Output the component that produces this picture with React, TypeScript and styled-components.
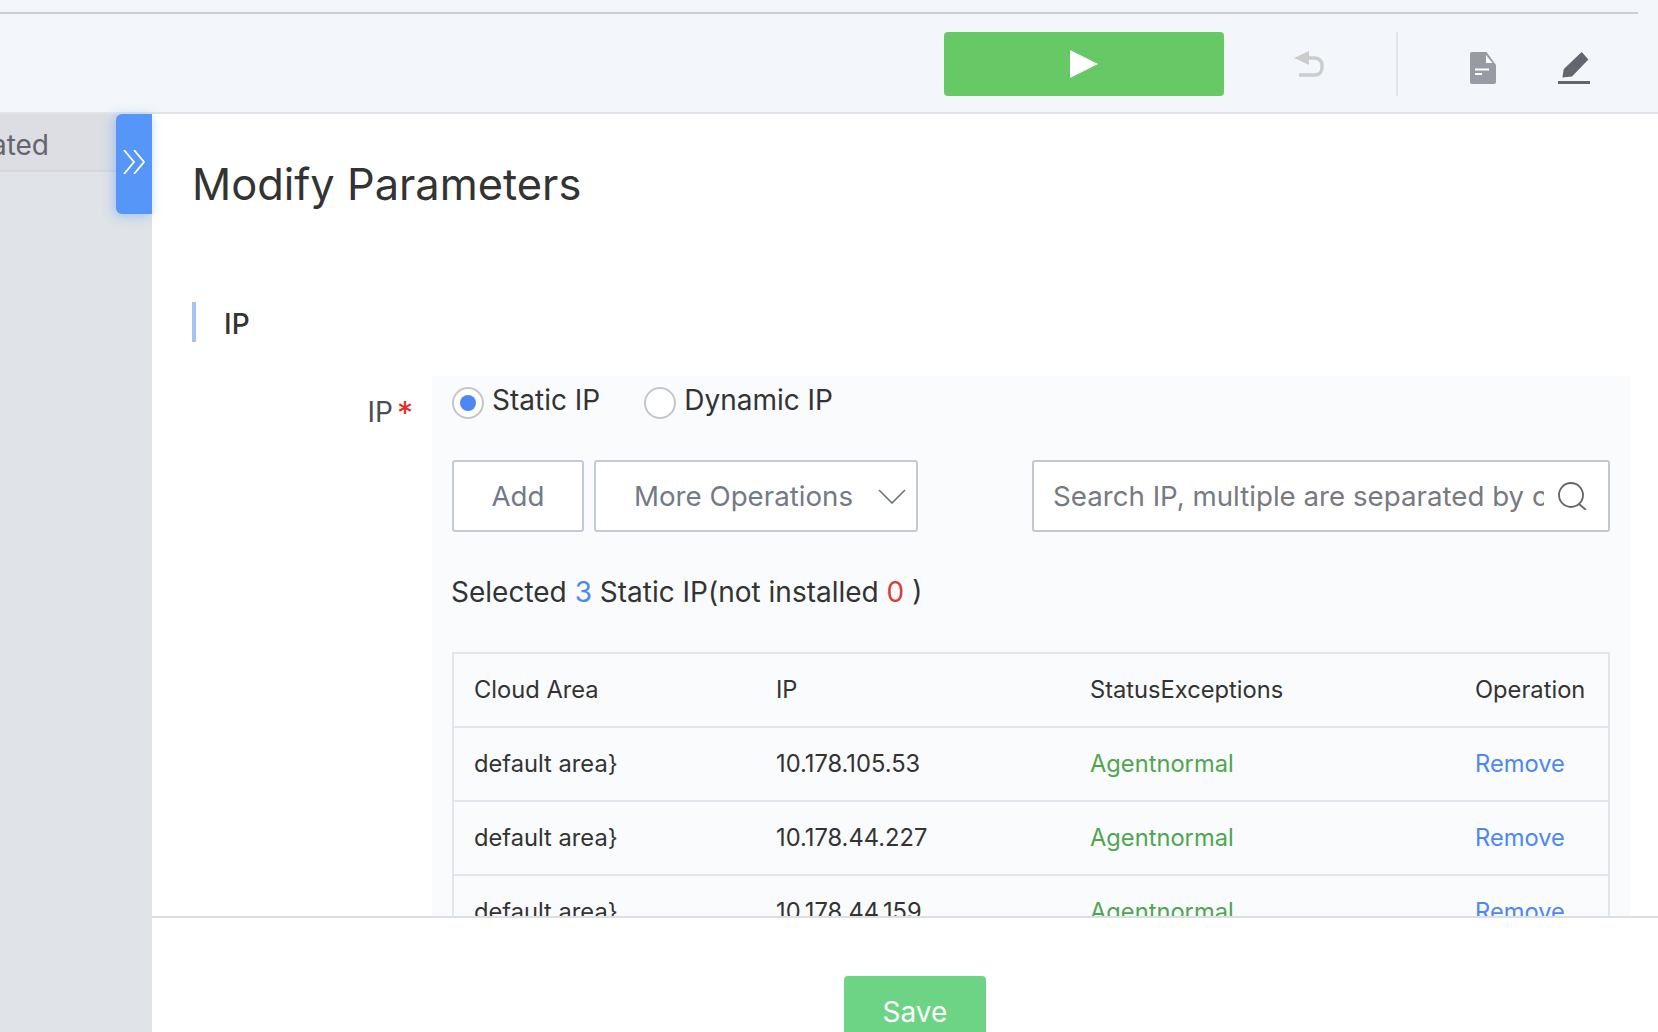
import React from "react";
import styled, { createGlobalStyle } from "styled-components";

const Global = createGlobalStyle`
  html, body { margin: 0; padding: 0; background: #fff; }
  body { font-family: Inter, "Noto Sans", "Liberation Sans", sans-serif; color: #333; }
  * { box-sizing: border-box; }
`;

const Page = styled.div`
  width: 1658px;
  height: 1032px;
  display: flex;
  flex-direction: column;
  overflow: hidden;
`;

const Toolbar = styled.header`
  height: 114px;
  flex: none;
  background: #f3f6fa;
  border-bottom: 2px solid #e1e5ea;
  padding-top: 12px;
`;

const TopRule = styled.div`
  height: 2px;
  margin-right: 20px;
  background: #c9ced9;
`;

const ToolRow = styled.div`
  display: flex;
  align-items: center;
  justify-content: flex-end;
  height: 64px;
  margin-top: 18px;
  padding-right: 68px;
`;

const RunButton = styled.button`
  width: 280px;
  height: 64px;
  border: 0;
  border-radius: 4px;
  background: #66c966;
  display: flex;
  align-items: center;
  justify-content: center;
  padding: 0;
`;

const ToolIcon = styled.svg<{ $ml: number; $mt?: number }>`
  display: block;
  flex: none;
  margin-left: ${(p) => p.$ml}px;
  margin-top: ${(p) => p.$mt ?? 0}px;
`;

const ToolDivider = styled.div`
  width: 2px;
  height: 64px;
  margin-left: 70px;
  background: #e1e4e9;
`;

const Body = styled.div`
  flex: 1;
  display: flex;
  min-height: 0;
`;

const Sidebar = styled.aside`
  position: relative;
  width: 152px;
  flex: none;
  background: #e0e3e7;
`;

const SideRow = styled.div`
  height: 58px;
  display: flex;
  align-items: center;
  justify-content: flex-end;
  padding: 5px 103px 0 0;
  background: #dcdee3;
  border-bottom: 2px solid #d4d7dd;
  font-size: 28px;
  color: #63656e;
  overflow: hidden;
  white-space: nowrap;
`;

const CollapseTab = styled.button`
  position: absolute;
  top: 0;
  right: 0;
  width: 36px;
  height: 100px;
  border: 0;
  padding: 36px 1px 0 0;
  border-radius: 6px 0 0 6px;
  background: #5596f8;
  box-shadow: -2px 2px 12px rgba(85, 150, 248, 0.45);
  display: flex;
  justify-content: center;
`;

const Main = styled.main`
  flex: 1;
  min-width: 0;
  display: flex;
  flex-direction: column;
  background: #fff;
`;

const Content = styled.div`
  flex: 1;
  min-height: 0;
  overflow: hidden;
  padding: 0 28px 0 40px;
`;

const Title = styled.h1`
  margin: 44px 0 0;
  font-size: 43.4px;
  line-height: 52px;
  font-weight: 400;
  color: #333;
`;

const SectionHead = styled.h2`
  margin: 92px 0 0;
  height: 40px;
  border-left: 4px solid #a3c2f5;
  padding-left: 28px;
  font-size: 28px;
  line-height: 44px;
  font-weight: 500;
  color: #333;
`;

const Field = styled.div`
  display: flex;
  margin-top: 34px;
`;

const FieldLabel = styled.div`
  width: 240px;
  flex: none;
  padding: 20px 19px 0 0;
  text-align: right;
  font-size: 28px;
  line-height: 32px;
  color: #4a4d55;
`;

const Star = styled.span`
  color: #ec2a1f;
  margin-left: 4px;
  font-size: 32px;
  vertical-align: -3px;
`;

const Panel = styled.div`
  flex: 1;
  min-width: 0;
  padding: 0 20px 0 20px;
  background: #fafbfd;
`;

const RadioRow = styled.div`
  display: flex;
  height: 84px;
  padding-top: 10px;
  gap: 44px;
`;

const RadioOption = styled.label`
  display: flex;
  align-items: flex-start;
  gap: 8px;
  font-size: 28px;
  line-height: 28px;
  color: #333;
`;

const RadioDot = styled.span<{ $on?: boolean }>`
  width: 32px;
  height: 32px;
  margin-top: 1px;
  border-radius: 50%;
  border: 2px solid #c3c6cc;
  background: #fff;
  display: flex;
  align-items: center;
  justify-content: center;
  &::after {
    content: "";
    width: 16px;
    height: 16px;
    border-radius: 50%;
    background: ${(p) => (p.$on ? "#4d87f6" : "transparent")};
  }
`;

const Actions = styled.div`
  display: flex;
  height: 72px;
`;

const OutlineButton = styled.button<{ $w: number; $ml?: number; $pl?: number }>`
  width: ${(p) => p.$w}px;
  margin-left: ${(p) => p.$ml ?? 0}px;
  height: 72px;
  border: 2px solid #c4cbd8;
  border-radius: 3px;
  background: #fff;
  color: #737a87;
  font-family: inherit;
  font-size: 27.7px;
  display: flex;
  align-items: center;
  justify-content: center;
  gap: 25px;
  padding: 0 0 0 ${(p) => p.$pl ?? 0}px;
`;

const SearchBox = styled.div`
  width: 578px;
  height: 72px;
  margin-left: auto;
  border: 2px solid #c4c8ce;
  border-radius: 3px;
  background: #fff;
  display: flex;
  align-items: center;
  padding: 0 21px 0 19px;
`;

const SearchInput = styled.input`
  width: 491px;
  flex: none;
  border: 0;
  outline: 0;
  padding: 0;
  background: transparent;
  font-family: inherit;
  font-size: 27.7px;
  color: #333;
  &::placeholder { color: #777a80; opacity: 1; }
`;

const SearchGlyph = styled.svg`
  margin-left: auto;
  flex: none;
`;

const Summary = styled.p`
  margin: 43px 0 0 -1px;
  font-size: 28px;
  line-height: 34px;
  color: #333;
`;

const Num = styled.span<{ $c: string }>`
  color: ${(p) => p.$c};
`;

const Table = styled.div`
  margin-top: 43px;
  border: 2px solid #e1e5ec;
  border-bottom: 0;
`;

const Row = styled.div`
  display: grid;
  grid-template-columns: 302px 314px 385px 1fr;
  height: 74px;
  padding-bottom: 2px;
  align-items: center;
  font-size: 23.7px;
  color: #333;
  &:first-child { height: 72px; }
  & + & { border-top: 2px solid #e1e5ec; }
`;

const Cell = styled.div<{ $c?: string }>`
  padding-left: 20px;
  white-space: nowrap;
  color: ${(p) => p.$c ?? "inherit"};
`;

const Footer = styled.footer`
  height: 116px;
  flex: none;
  border-top: 2px solid #dcdee1;
  background: #fff;
  display: flex;
  justify-content: center;
  padding-top: 58px;
  padding-left: 20px;
`;

const SaveButton = styled.button`
  width: 142px;
  height: 72px;
  border: 0;
  border-radius: 4px;
  background: #6dd486;
  color: #fff;
  font-family: inherit;
  font-size: 28px;
  padding: 0;
`;

const rows = ["10.178.105.53", "10.178.44.227", "10.178.44.159"];

export default function App() {
  return (
    <Page>
      <Global />
      <Toolbar>
        <TopRule />
        <ToolRow>
          <RunButton aria-label="Run">
            <svg width="28" height="28" viewBox="0 0 28 28"><path d="M0 0 28 14 0 28Z" fill="#fff" /></svg>
          </RunButton>
          <ToolIcon $ml={70} width="32" height="26" viewBox="0 0 32 26" fill="none">
            <path d="M0 7 15 0V14Z" fill="#ccc" />
            <path d="M13 7H21a7 7 0 0 1 7 7v3a7 7 0 0 1-7 7H5" stroke="#ccc" strokeWidth="3.4" />
          </ToolIcon>
          <ToolDivider />
          <ToolIcon $ml={72} $mt={8} width="26" height="32" viewBox="0 0 26 32">
            <path d="M2 0H16.5L26 13V30a2 2 0 0 1-2 2H2a2 2 0 0 1-2-2V2a2 2 0 0 1 2-2Z" fill="#989ba3" />
            <path d="M16 3 22.5 11H16Z" fill="#fff" />
            <path d="M5 16.5H19V18.5H5ZM5 21H12V23H5Z" fill="#fff" />
          </ToolIcon>
          <ToolIcon $ml={62} $mt={8} width="32" height="32" viewBox="0 0 32 32">
            <path d="M5.8 17 23.7 0 30.4 7.5 14 24.4 4.4 25.5Z" fill="#63666e" />
            <path d="M0 29H32V32H0Z" fill="#63666e" />
          </ToolIcon>
        </ToolRow>
      </Toolbar>
      <Body>
        <Sidebar>
          <SideRow>ated</SideRow>
          <CollapseTab aria-label="Collapse">
            <svg width="22" height="24" viewBox="0 0 22 24" fill="none" stroke="#fff" strokeWidth="1.8">
              <path d="M1 0 11 12 1 24M11 0 21 12 11 24" />
            </svg>
          </CollapseTab>
        </Sidebar>
        <Main>
          <Content>
            <Title>Modify Parameters</Title>
            <SectionHead>IP</SectionHead>
            <Field>
              <FieldLabel>IP<Star>*</Star></FieldLabel>
              <Panel>
                <RadioRow>
                  <RadioOption><RadioDot $on />Static IP</RadioOption>
                  <RadioOption><RadioDot />Dynamic IP</RadioOption>
                </RadioRow>
                <Actions>
                  <OutlineButton $w={132}>Add</OutlineButton>
                  <OutlineButton $w={324} $ml={10} $pl={28}>
                    More Operations
                    <svg width="28" height="15" viewBox="0 0 28 15" fill="none" stroke="#6b7280" strokeWidth="1.6">
                      <path d="M1 1 14 14 27 1" />
                    </svg>
                  </OutlineButton>
                  <SearchBox>
                    <SearchInput placeholder="Search IP, multiple are separated by commas" />
                    <SearchGlyph width="29" height="28" viewBox="0 0 29 28" fill="none" stroke="#63656e" strokeWidth="1.8">
                      <circle cx="13" cy="13" r="12" />
                      <path d="M21 22 28 28" />
                    </SearchGlyph>
                  </SearchBox>
                </Actions>
                <Summary>
                  Selected <Num $c="#4d87f6">3</Num> Static IP(not installed <Num $c="#dc3c36">0</Num> )
                </Summary>
                <Table>
                  <Row>
                    <Cell>Cloud Area</Cell>
                    <Cell>IP</Cell>
                    <Cell>StatusExceptions</Cell>
                    <Cell>Operation</Cell>
                  </Row>
                  {rows.map((ip) => (
                    <Row key={ip}>
                      <Cell>default area{"}"}</Cell>
                      <Cell>{ip}</Cell>
                      <Cell $c="#4ea650">Agentnormal</Cell>
                      <Cell $c="#4d87f6">Remove</Cell>
                    </Row>
                  ))}
                </Table>
              </Panel>
            </Field>
          </Content>
          <Footer>
            <SaveButton>Save</SaveButton>
          </Footer>
        </Main>
      </Body>
    </Page>
  );
}
